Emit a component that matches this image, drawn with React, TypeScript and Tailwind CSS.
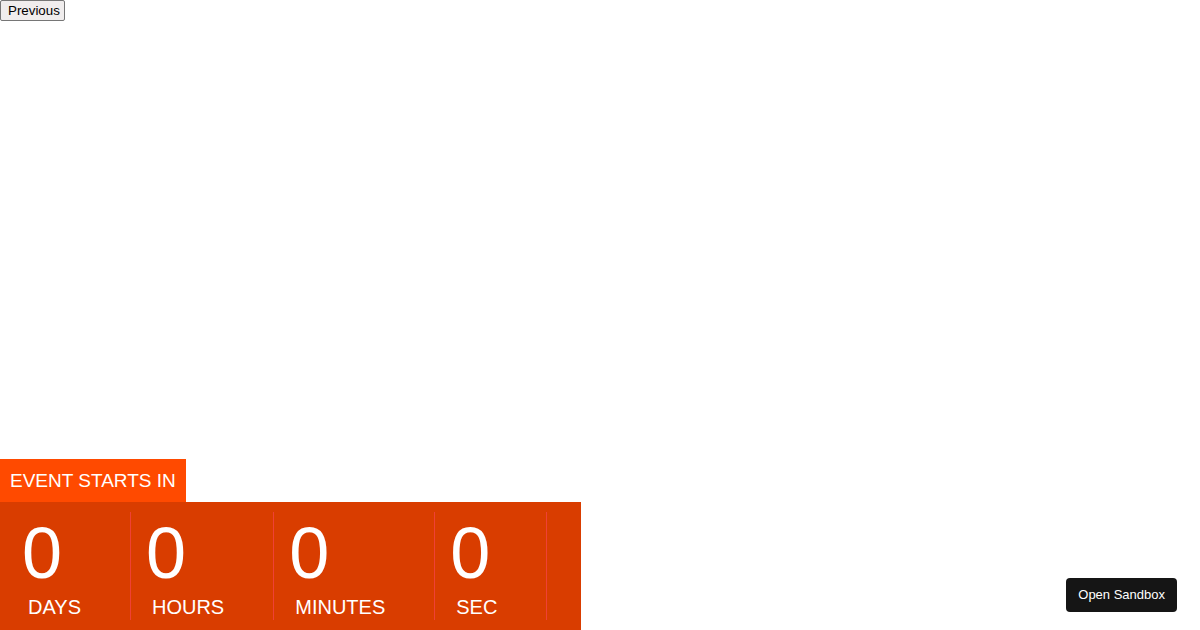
import React from "react";

const units = [
  { v: "0", l: "DAYS", pad: "pl-[17px] pr-[49px]" },
  { v: "0", l: "HOURS", pad: "pl-[15px] pr-[49px]" },
  { v: "0", l: "MINUTES", pad: "pl-[15px] pr-[49px]" },
  { v: "0", l: "SEC", pad: "pl-[15px] pr-[49px]" },
];

export default function App() {
  return (
    <div className="relative w-[1200px] h-[630px] overflow-hidden bg-white font-['Liberation_Sans',Arial,sans-serif]">
      <div className="flex flex-col h-full">
        <div className="flex">
          <button className="flex items-center justify-start pl-[7px] h-[21px] w-[65px] text-[13.33px] leading-[15px] text-black bg-[#f0eded] border border-[#767676] rounded-[2px]">
            Previous
          </button>
        </div>
        <div className="flex-1" />
        <div className="flex flex-col items-start">
          <div className="bg-[#ff4a00] text-white text-[19px] leading-[23px] px-[10px] py-[10px]">
            EVENT STARTS IN
          </div>
          <div className="flex bg-[#d93d00] text-white pl-[5px] pr-[34px] pt-[10px] pb-[10px]">
            {units.map((u) => (
              <div
                key={u.l}
                className={`flex flex-col ${u.pad} pt-[5px] pb-[1px] border-r border-[#ef4136]`}
              >
                <div className="text-[72px] leading-[72px]">{u.v}</div>
                <div className="text-[20px] leading-[24px] mt-[6px] ml-[6px]">{u.l}</div>
              </div>
            ))}
          </div>
        </div>
      </div>
      <button className="absolute right-[23px] bottom-[18px] h-[34px] px-[12px] rounded-[4px] bg-[#151515] text-white text-[13px] leading-[34px]">
        Open Sandbox
      </button>
    </div>
  );
}
